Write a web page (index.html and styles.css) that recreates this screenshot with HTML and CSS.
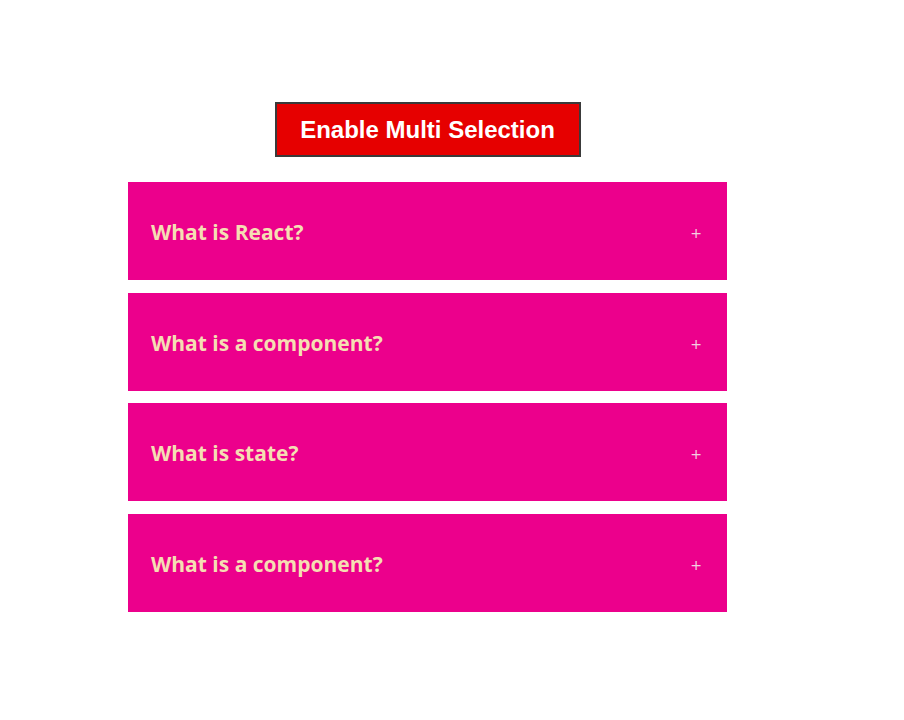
FILE: index.html
```html
<!DOCTYPE html>
<html>
<head>
  <title>Accordion</title>
  <link rel="stylesheet" href="styles.css">
</head>
<body>
  <div class="wrapper">
    <button class="multi-btn">Enable Multi Selection</button>
    <div class="accordion">
      <div class="item">
        <div class="title">
          <h3>What is React?</h3>
          <span class="sign">+</span>
        </div>
      </div>
      <div class="item">
        <div class="title">
          <h3>What is a component?</h3>
          <span class="sign">+</span>
        </div>
      </div>
      <div class="item">
        <div class="title">
          <h3>What is state?</h3>
          <span class="sign">+</span>
        </div>
      </div>
      <div class="item">
        <div class="title">
          <h3>What is a component?</h3>
          <span class="sign">+</span>
        </div>
      </div>
    </div>
  </div>
</body>
</html>
```

FILE: styles.css
```css
body {
  margin: 0;
  background: #fff;
}

.wrapper {
  width: 599px;
  margin-left: 128px;
  padding-top: 102px;
  display: flex;
  flex-direction: column;
  align-items: center;
  gap: 25px;
}

.multi-btn {
  width: 306px;
  height: 55px;
  background: #e60000;
  color: #fff;
  border: 2px solid #3a3a3a;
  font-family: "Liberation Sans", Arial, sans-serif;
  font-weight: bold;
  font-size: 24px;
  cursor: pointer;
}

.accordion {
  width: 599px;
  display: flex;
  flex-direction: column;
  gap: 12.67px;
}

.item {
  background: #ec008c;
  height: 98px;
  padding: 2px 25px 0 23px;
  box-sizing: border-box;
  display: flex;
  align-items: center;
}

.title {
  width: 100%;
  display: flex;
  justify-content: space-between;
  align-items: center;
  cursor: pointer;
}

.title h3 {
  margin: 0;
  color: #f5deb3;
  font-family: "Open Sans", sans-serif;
  font-size: 21px;
  font-weight: bold;
}

.sign {
  color: #f3d0e0;
  font-family: "DejaVu Sans", sans-serif;
  font-size: 14px;
  padding-top: 2px;
}
```
